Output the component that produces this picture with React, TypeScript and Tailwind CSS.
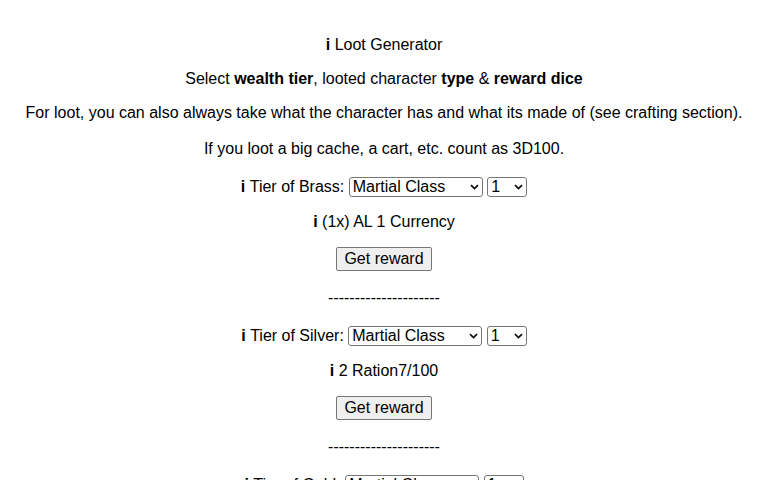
import React, { useState } from 'react';

const tiers = ['Brass', 'Silver', 'Gold'];
const classes = ['Martial Class', 'Caster Class', 'Commoner', 'Noble'];
const dice = ['1', '2', '3', '4', '5', '6'];

const rewards: Record<string, string> = {
  Brass: '(1x) AL 1 Currency',
  Silver: '2 Ration7/100',
  Gold: '(1x) AL 3 Currency',
};

const Chevron: React.FC = () => (
  <svg
    className="pointer-events-none absolute right-[4px] top-1/2 -translate-y-1/2"
    width="9"
    height="6"
    viewBox="0 0 9 6"
  >
    <path d="M1 1.2 L4.5 4.6 L8 1.2" fill="none" stroke="#111" strokeWidth="1.8" />
  </svg>
);

const Picker: React.FC<{ options: string[]; width: string }> = ({ options, width }) => {
  const [value, setValue] = useState(options[0]);
  return (
    <span className={`relative inline-block align-middle ${width}`}>
      <select
        value={value}
        onChange={(e) => setValue(e.target.value)}
        className="appearance-none w-full h-[20px] pl-[3px] pr-[14px] border border-[#767676] rounded-[3px] bg-white text-black text-[16px] leading-[18px] align-middle"
      >
        {options.map((o) => (
          <option key={o}>{o}</option>
        ))}
      </select>
      <Chevron />
    </span>
  );
};

const Tier: React.FC<{ name: string; last?: boolean }> = ({ name, last }) => (
  <>
    <div className="mt-[19px] h-[20px] flex items-center justify-center">
      <b>i</b>&nbsp;Tier of {name}:&nbsp;
      <Picker options={classes} width="w-[134px]" />
      &nbsp;
      <Picker options={dice} width="w-[40px]" />
    </div>
    {!last && (
      <>
        <p className="mt-[16px]">
          <b>i</b> {rewards[name]}
        </p>
        <div className="mt-[16px]">
          <button className="h-[24px] px-[7px] border border-[#767676] rounded-[2px] bg-[#efefef] leading-[18px]">
            Get reward
          </button>
        </div>
        <p className="mt-[18px]">---------------------</p>
      </>
    )}
  </>
);

export default function App() {
  return (
    <div className="min-h-screen bg-white text-black text-center text-[16px] leading-[18px] font-['Liberation_Sans',Arial,sans-serif] pt-[36px]">
      <p>
        <b>i</b> Loot Generator
      </p>
      <p className="mt-[16px]">
        Select <b>wealth tier</b>, looted character <b>type</b> &amp; <b>reward dice</b>
      </p>
      <p className="mt-[16px]">
        For loot, you can also always take what the character has and what its made of (see crafting section).
      </p>
      <p className="mt-[18px]">If you loot a big cache, a cart, etc. count as 3D100.</p>
      {tiers.map((t, i) => (
        <Tier key={t} name={t} last={i === tiers.length - 1} />
      ))}
    </div>
  );
}
